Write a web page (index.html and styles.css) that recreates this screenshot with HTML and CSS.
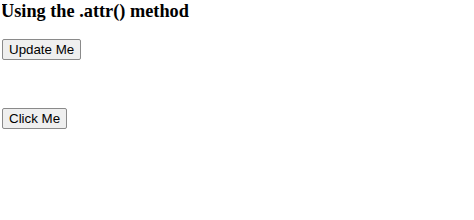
FILE: index.html
```html
<!DOCTYPE html>
<html lang="en">
<head>
  <meta charset="UTF-8">
  <title>attr demo</title>
  <link rel="stylesheet" href="styles.css">
</head>
<body>
  <h3 class="title">Using the .attr() method</h3>
  <button class="btn" id="target">Update Me</button>
  <div class="spacer"></div>
  <button class="btn" id="trigger">Click Me</button>
</body>
</html>
```

FILE: styles.css
```css
body {
  margin: 0 2px;
  font-family: 'Liberation Serif', 'Times New Roman', serif;
}

.title {
  font-size: 18.3px;
  font-weight: bold;
  margin: 0 0 17px -1px;
  padding-top: 1px;
}

.btn {
  display: block;
  font-family: 'Liberation Sans', Arial, sans-serif;
  font-size: 13.33px;
  color: #000;
  background: #efefef;
  border: 1px solid #8a8a8a;
  border-radius: 2px;
  padding: 2px 6px;
}

.spacer {
  height: 48px;
}
```
